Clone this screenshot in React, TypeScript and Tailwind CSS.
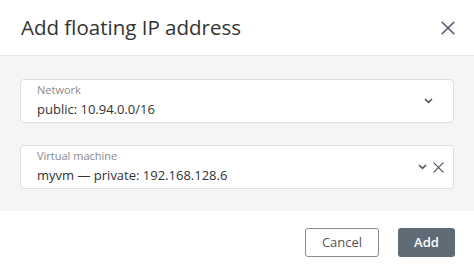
import React from 'react';

const font = { fontFamily: '"Open Sans", "Liberation Sans", sans-serif' };

function Chevron() {
  return (
    <svg width="9" height="6" viewBox="0 0 9 6" fill="none" stroke="#4b5563" strokeWidth="1.7" strokeLinecap="round">
      <path d="M1.5 1.5 L4.5 4.3 L7.5 1.5" />
    </svg>
  );
}

function Cross({ size = 12 }: { size?: number }) {
  return (
    <svg width={size} height={size} viewBox="0 0 12 12" fill="none" stroke="#4b5563" strokeWidth="1.3" strokeLinecap="round">
      <path d="M1 1 L11 11 M11 1 L1 11" />
    </svg>
  );
}

function SelectField({ label, value, clearable }: { label: string; value: string; clearable?: boolean }) {
  return (
    <div className="flex h-[44px] items-center rounded-[4px] border border-[#dedede] bg-white pl-4 pr-[9px]">
      <div className="flex flex-1 flex-col">
        <span className="text-[11px] leading-[12px] text-[#8a8a8a]">{label}</span>
        <span className="mt-[4px] text-[13px] leading-[18px] text-[#333]">{value}</span>
      </div>
      {clearable ? (
        <div className="flex items-center gap-[6px]">
          <Chevron />
          <Cross size={11} />
        </div>
      ) : (
        <div className="pr-[11px]">
          <Chevron />
        </div>
      )}
    </div>
  );
}

export default function App() {
  return (
    <div className="h-[271px] w-[474px] bg-white" style={font}>
      {/* Header */}
      <div className="flex h-[56px] items-center justify-between border-b border-[#e6e6e6] pl-[21px] pr-[19px]">
        <h1 className="text-[20.5px] font-normal text-[#333]">Add floating IP address</h1>
        <Cross size={14} />
      </div>

      {/* Body */}
      <div className="flex flex-col gap-[22px] bg-[#f5f5f5] px-[20px] pb-[22px] pt-[23px]">
        <SelectField label="Network" value="public: 10.94.0.0/16" />
        <SelectField label="Virtual machine" value="myvm — private: 192.168.128.6" clearable />
      </div>

      {/* Footer */}
      <div className="flex justify-end gap-[19px] px-[19px] pt-[17px]">
        <button className="h-[29px] w-[74px] rounded-[3px] border border-[#8c8c8c] bg-white text-[13px] text-[#555]">
          Cancel
        </button>
        <button className="h-[29px] w-[57px] rounded-[3px] bg-[#5f6b75] text-[13px] font-semibold text-white">
          Add
        </button>
      </div>
    </div>
  );
}
